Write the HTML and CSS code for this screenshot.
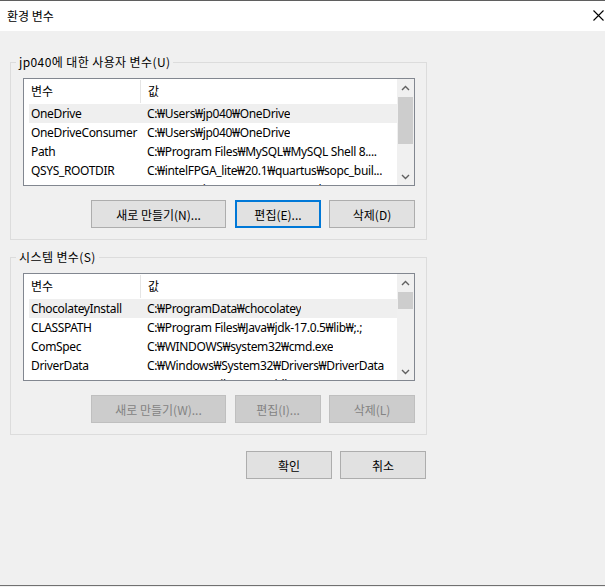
FILE: index.html
```
<!DOCTYPE html>
<html>
<head>
<meta charset="utf-8">
<title>환경 변수</title>
<link rel="stylesheet" href="styles.css">
</head>
<body>
<div class="window">
	<div class="titlebar">
		<span class="title">환경 변수</span>
		<svg class="close" width="11" height="11" viewBox="0 0 11 11"><path d="M0.5 0.5 L10.5 10.5 M10.5 0.5 L0.5 10.5" stroke="#000" stroke-width="1.1" fill="none"/></svg>
	</div>

	<div class="content">
		<fieldset class="group">
			<legend>jp040에 대한 사용자 변수(U)</legend>
			<div class="listbox">
				<div class="list">
					<div class="row head"><span class="name">변수</span><span class="value">값</span></div>
					<div class="row sel"><span class="name">OneDrive</span><span class="value">C:₩Users₩jp040₩OneDrive</span></div>
					<div class="row"><span class="name">OneDriveConsumer</span><span class="value">C:₩Users₩jp040₩OneDrive</span></div>
					<div class="row"><span class="name">Path</span><span class="value">C:₩Program Files₩MySQL₩MySQL Shell 8....</span></div>
					<div class="row"><span class="name">QSYS_ROOTDIR</span><span class="value">C:₩intelFPGA_lite₩20.1₩quartus₩sopc_buil...</span></div>
					<div class="row"><span class="name">TEMP</span><span class="value">C:₩Users₩jp040₩AppData₩Local₩Temp</span></div>
				</div>
				<div class="scrollbar">
					<div class="arrow"><svg width="9" height="6" viewBox="0 0 9 6"><path d="M1 5 L4.5 1.5 L8 5" stroke="#606060" stroke-width="1.4" fill="none"/></svg></div>
					<div class="thumb"></div>
					<div class="track"></div>
					<div class="arrow"><svg width="9" height="6" viewBox="0 0 9 6"><path d="M1 1 L4.5 4.5 L8 1" stroke="#606060" stroke-width="1.4" fill="none"/></svg></div>
				</div>
			</div>
			<div class="buttons">
				<button class="btn wide">새로 만들기(N)...</button>
				<button class="btn focus">편집(E)...</button>
				<button class="btn">삭제(D)</button>
			</div>
		</fieldset>

		<fieldset class="group second">
			<legend>시스템 변수(S)</legend>
			<div class="listbox">
				<div class="list">
					<div class="row head"><span class="name">변수</span><span class="value">값</span></div>
					<div class="row sel"><span class="name">ChocolateyInstall</span><span class="value">C:₩ProgramData₩chocolatey</span></div>
					<div class="row"><span class="name">CLASSPATH</span><span class="value">C:₩Program Files₩Java₩jdk-17.0.5₩lib₩;.;</span></div>
					<div class="row"><span class="name">ComSpec</span><span class="value">C:₩WINDOWS₩system32₩cmd.exe</span></div>
					<div class="row"><span class="name">DriverData</span><span class="value">C:₩Windows₩System32₩Drivers₩DriverData</span></div>
					<div class="row"><span class="name">JAVA_HOME</span><span class="value">C:₩Program Files₩Java₩jdk-17.0.5</span></div>
				</div>
				<div class="scrollbar">
					<div class="arrow"><svg width="9" height="6" viewBox="0 0 9 6"><path d="M1 5 L4.5 1.5 L8 5" stroke="#606060" stroke-width="1.4" fill="none"/></svg></div>
					<div class="thumb small"></div>
					<div class="track"></div>
					<div class="arrow"><svg width="9" height="6" viewBox="0 0 9 6"><path d="M1 1 L4.5 4.5 L8 1" stroke="#606060" stroke-width="1.4" fill="none"/></svg></div>
				</div>
			</div>
			<div class="buttons">
				<button class="btn wide" disabled>새로 만들기(W)...</button>
				<button class="btn" disabled>편집(I)...</button>
				<button class="btn" disabled>삭제(L)</button>
			</div>
		</fieldset>

		<div class="buttons dialog">
			<button class="btn">확인</button>
			<button class="btn">취소</button>
		</div>
	</div>
</div>
</body>
</html>
```

FILE: styles.css
```
html, body {
	margin: 0;
	padding: 0;
	background: #f0f0f0;
}

body {
	font-family: "Noto Sans", "Noto Sans CJK KR", sans-serif;
	font-size: 12px;
	color: #000;
}

.window {
	height: 584px;
	border-top: 1px solid #5f5f5f;
	border-bottom: 1px solid #707070;
	background: #f0f0f0;
}

.titlebar {
	height: 30px;
	background: #fff;
	display: flex;
	align-items: center;
	justify-content: space-between;
	padding: 0 1px 0 7px;
}

.title {
	font-family: "Noto Sans CJK KR", sans-serif;
	font-size: 12px;
	margin-top: -1px;
}

.close {
	margin-top: -1px;
}

.group {
	margin: 23px 0 0 10px;
	width: 392px;
	min-width: 0;
	padding: 8px 11px 11px 12px;
	border: 1px solid #dcdcdc;
}

.group.second {
	margin-top: 9px;
}

.group legend {
	padding: 0 3px;
	margin-left: -7px;
	line-height: 16px;
	letter-spacing: 0.4px;
	font-family: "Noto Sans CJK KR", sans-serif;
}

.listbox {
	display: flex;
	height: 106px;
	border: 1px solid #828790;
	background: #fff;
}

.list {
	flex: 1;
	overflow: hidden;
}

.row {
	display: flex;
	height: 19px;
	line-height: 19px;
	margin-left: 5px;
	white-space: nowrap;
	letter-spacing: -0.35px;
}

.row.head {
	height: 25px;
	line-height: 24px;
	letter-spacing: 0;
}

.row.sel {
	background: #efefef;
}

.name {
	width: 109px;
	padding-left: 2px;
	overflow: hidden;
}

.head .name {
	border-right: 1px solid #e5e5e5;
	margin: 1px 0;
	line-height: 22px;
}

.value {
	padding-left: 7px;
	overflow: hidden;
}

.head span {
	font-family: "Noto Sans CJK KR", sans-serif;
}

.scrollbar {
	width: 17px;
	display: flex;
	flex-direction: column;
	background: #f0f0f0;
}

.arrow {
	height: 17px;
	display: flex;
	align-items: center;
	justify-content: center;
}

.thumb {
	height: 47px;
	margin: 1px 1px 0 1px;
	background: #cdcdcd;
}

.thumb.small {
	height: 17px;
}

.track {
	flex: 1;
}

.buttons {
	display: flex;
	justify-content: flex-end;
	gap: 8px;
	margin-top: 14px;
}

.btn {
	width: 86px;
	height: 28px;
	margin: 0;
	padding: 0;
	background: #e1e1e1;
	border: 1px solid #adadad;
	font-family: "Noto Sans CJK KR", "Noto Sans", sans-serif;
	font-size: 12px;
	color: #000;
}

.btn.wide {
	width: 135px;
	margin-right: 1px;
}

.btn.focus {
	border: 2px solid #0078d7;
}

.btn:disabled {
	background: #cccccc;
	border-color: #bfbfbf;
	color: #838383;
}

.dialog {
	width: 426px;
	margin-top: 16px;
}
```
